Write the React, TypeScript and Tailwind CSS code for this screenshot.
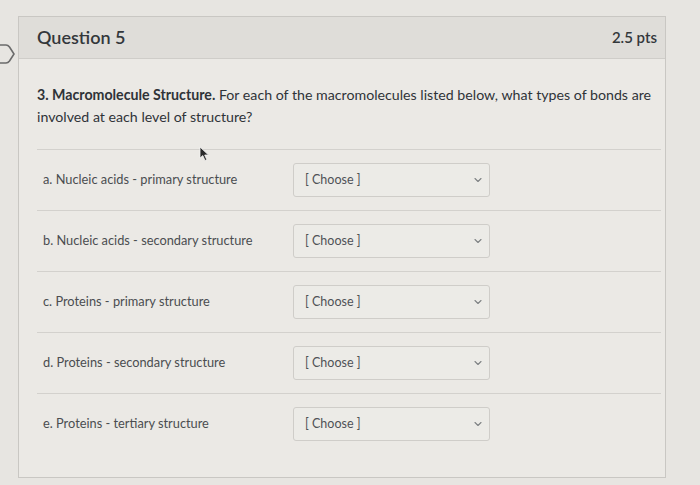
import { ChevronDown } from 'lucide-react'

const ROWS = [
  'a. Nucleic acids - primary structure',
  'b. Nucleic acids - secondary structure',
  'c. Proteins - primary structure',
  'd. Proteins - secondary structure',
  'e. Proteins - tertiary structure',
]

// Flag marker peeking in from the left edge.
function Marker() {
  return (
    <svg width="18" height="24" viewBox="0 0 18 24" className="mt-[26px] shrink-0">
      <path d="M-4 3 H6 Q8 3 9.5 5 L14 12 L9.5 19 Q8 21 6 21 H-4" fill="none" stroke="#6b6b6b" strokeWidth="1.6" />
    </svg>
  )
}

function Cursor() {
  return (
    <svg width="12" height="16" viewBox="0 0 12 16" className="absolute left-[199px] top-[146px]">
      <path d="M1 1 L1 12 L3.8 9.6 L6 14.5 L7.8 13.7 L5.7 9 L9.5 9 Z" fill="#2a2a2a" stroke="#f2f2f2" strokeWidth="0.8" />
    </svg>
  )
}

export default function App() {
  return (
    <div className="relative w-[700px] h-[485px] overflow-hidden bg-[#e7e5e1] pt-[16px] flex items-start text-[#2f3338]"
      style={{ fontFamily: 'Lato, "Open Sans", sans-serif' }}>
      <Marker />
      <div className="w-[648px] h-[462px] border border-[#c9c7c3] bg-[#ebe9e5] flex flex-col">
        <div className="h-[42px] shrink-0 bg-[#dfddd9] border-b border-[#cfcdc9] flex items-center justify-between pl-[18px] pr-[8px]">
          <span className="text-[18px] font-semibold text-[#33373b]">Question 5</span>
          <span className="text-[15px] font-semibold text-[#33373b]">2.5 pts</span>
        </div>
        <div className="pl-[18px] pr-[2px] pt-[25px]">
          <p className="text-[14.2px] leading-[22px] text-[#2f3338]">
            <span className="font-bold">3. Macromolecule Structure.</span> For each of the macromolecules listed below, what types of bonds are involved at each level of structure?
          </p>
          <div className="mt-[21px] mr-[2px]">
            {ROWS.map(r => (
              <div key={r} className="h-[61px] flex items-center border-t border-[#d3d1cd]">
                <span className="w-[256px] pl-[6px] text-[12.8px] text-[#4a4d50]">{r}</span>
                <div className="w-[197px] h-[34px] border border-[#cfcdc9] rounded-[3px] bg-[#ecebe7] flex items-center justify-between pl-[11px] pr-[5px]">
                  <span className="text-[12.5px] text-[#4f5256]">[ Choose ]</span>
                  <ChevronDown size={12} strokeWidth={2.2} className="text-[#7d8083]" />
                </div>
              </div>
            ))}
          </div>
        </div>
      </div>
      <Cursor />
    </div>
  )
}
